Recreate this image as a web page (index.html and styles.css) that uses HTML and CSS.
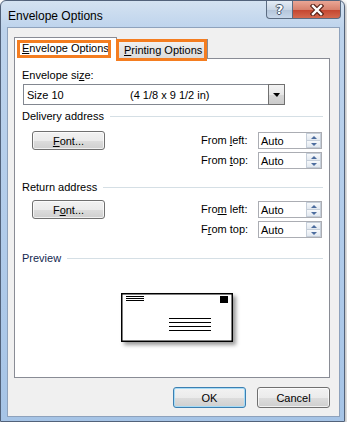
FILE: index.html
```html
<!DOCTYPE html>
<html lang="en">
<head>
    <meta charset="UTF-8">
    <meta name="viewport" content="width=device-width, initial-scale=1.0">
    <title>Envelope Options</title>
    <link rel="stylesheet" href="styles.css">
</head>
<body>
    <div class="window">
        <div class="titlebar">
            <span class="title">Envelope Options</span>
            <div class="caption-buttons">
                <div class="caption-btn help">?</div>
                <div class="caption-btn close">
                    <svg width="14" height="12" viewBox="0 0 14 12">
                        <path d="M3 2 L11 10 M11 2 L3 10" stroke="#5a2318" stroke-width="4.6" stroke-linecap="square"/>
                        <path d="M3 2 L11 10 M11 2 L3 10" stroke="#fff" stroke-width="2.4" stroke-linecap="square"/>
                    </svg>
                </div>
            </div>
        </div>

        <div class="client">
            <div class="tabs">
                <div class="tab tab-active"><u>E</u>nvelope Options</div>
                <div class="tab tab-print"><u>P</u>rinting Options</div>
            </div>

            <div class="panel">
                <div class="field-label">Envelope si<u>z</u>e:</div>
                <div class="select">
                    <span class="select-size">Size 10</span>
                    <span>(4 1/8 x 9 1/2 in)</span>
                    <span class="select-btn"><span class="arrow-down"></span></span>
                </div>

                <div class="group-header">Delivery address</div>
                <div class="address-row">
                    <button class="btn font-btn"><u>F</u>ont...</button>
                    <div class="positions">
                        <span class="pos-label">From <u>l</u>eft:</span>
                        <div class="spin">
                            <span class="spin-value">Auto</span>
                            <span class="spin-btns"><span class="spin-up"></span><span class="spin-down"></span></span>
                        </div>
                        <span class="pos-label">From <u>t</u>op:</span>
                        <div class="spin">
                            <span class="spin-value">Auto</span>
                            <span class="spin-btns"><span class="spin-up"></span><span class="spin-down"></span></span>
                        </div>
                    </div>
                </div>

                <div class="group-header group-return">Return address</div>
                <div class="address-row address-return">
                    <button class="btn font-btn">F<u>o</u>nt...</button>
                    <div class="positions">
                        <span class="pos-label">Fro<u>m</u> left:</span>
                        <div class="spin">
                            <span class="spin-value">Auto</span>
                            <span class="spin-btns"><span class="spin-up"></span><span class="spin-down"></span></span>
                        </div>
                        <span class="pos-label">F<u>r</u>om top:</span>
                        <div class="spin">
                            <span class="spin-value">Auto</span>
                            <span class="spin-btns"><span class="spin-up"></span><span class="spin-down"></span></span>
                        </div>
                    </div>
                </div>

                <div class="group-header group-preview">Preview</div>
                <div class="envelope">
                    <svg width="112" height="49" viewBox="0 0 112 49">
                        <rect x="0.75" y="0.75" width="110.5" height="47.5" fill="#fff" stroke="#000" stroke-width="1.5"/>
                        <path d="M5 3.5 H23 M5 5.5 H23 M5 7.5 H23" stroke="#000" stroke-width="1"/>
                        <rect x="99" y="3" width="8" height="7" fill="#000"/>
                        <path d="M48 25.5 H90 M48 29.5 H90 M48 33.5 H90 M48 37.5 H90" stroke="#000" stroke-width="1.2"/>
                    </svg>
                </div>
            </div>

            <div class="dialog-buttons">
                <button class="btn btn-default">OK</button>
                <button class="btn">Cancel</button>
            </div>
        </div>
    </div>
</body>
</html>
```

FILE: styles.css
```css
body {
    margin: 0;
    background-color: #fff;
    font-family: "Liberation Sans", Arial, sans-serif;
    font-size: 11px;
    color: #000;
}

u {
    text-decoration-thickness: 1px;
    text-underline-offset: 1px;
}

.window {
    width: 345px;
    height: 422px;
    box-sizing: border-box;
    border: 1px solid #52627a;
    border-radius: 6px 6px 0 0;
    background: linear-gradient(to bottom, #d4e2f1, #bdd3ec 28px, #b0cbea 60%, #a6c4e6);
    box-shadow: 1px 2px 4px rgba(0, 0, 0, 0.35);
    display: flex;
    flex-direction: column;
}

/* title bar */
.titlebar {
    height: 26px;
    flex-shrink: 0;
    display: flex;
    justify-content: space-between;
}

.title {
    font-size: 12px;
    padding: 8px 0 0 7px;
    line-height: 14px;
}

.caption-buttons {
    display: flex;
    align-self: flex-start;
    margin-right: 3px;
}

.caption-btn {
    height: 18px;
    box-sizing: border-box;
    border: 1px solid #5b6c82;
    border-top: none;
    display: flex;
    align-items: center;
    justify-content: center;
}

.help {
    width: 27px;
    border-radius: 0 0 0 4px;
    background: linear-gradient(to bottom, #e4ecf5, #c9d6e5 50%, #b3c4d9 51%, #c7d7ea);
    color: #fff;
    font-family: "DejaVu Sans", sans-serif;
    font-weight: bold;
    font-size: 13px;
    line-height: 16px;
    text-shadow: 1px 0 0 #44546a, -1px 0 0 #44546a, 0 1px 0 #44546a, 0 -1px 0 #44546a;
}

.close {
    width: 48px;
    border-left: none;
    border-radius: 0 0 4px 0;
    background: linear-gradient(to bottom, #eaa695, #d8826e 50%, #c4442e 51%, #d4694f);
}

/* client area */
.client {
    flex: 1;
    margin: 0 4px 4px 6px;
    border: 1px solid #8ea2bc;
    background-color: #f0f0f0;
    padding: 9px 9px 8px 6px;
    display: flex;
    flex-direction: column;
    min-height: 0;
}

.tabs {
    height: 21px;
    display: flex;
    align-items: flex-end;
    position: relative;
    z-index: 1;
}

.tab {
    position: relative;
    box-sizing: border-box;
    height: 19px;
    width: 91px;
    padding: 3px 0 0 7px;
    border: 1px solid #898c95;
    border-left: none;
    border-bottom: none;
    background: linear-gradient(to bottom, #f4f4f4, #e6e6e6 50%, #dcdcdc);
    line-height: 14px;
}

.tab-active {
    width: 103px;
    height: 22px;
    margin-bottom: -1px;
    padding-top: 3px;
    border-left: 1px solid #898c95;
    background: #fff;
}

.tab-active::after {
    content: '';
    position: absolute;
    left: 2px;
    top: 2px;
    right: 5px;
    bottom: 1px;
    border: 3px solid #f47d20;
}

.tab-print::after {
    content: '';
    position: absolute;
    left: -1px;
    top: -1px;
    right: 0;
    bottom: -3px;
    border: 3px solid #f47d20;
}

.panel {
    flex: 1;
    border: 1px solid #898c95;
    background-color: #fff;
    padding: 9px 6px 0 7px;
    min-height: 0;
}

.field-label {
    line-height: 15px;
}

.select {
    margin: 1px 0 0 1px;
    width: 262px;
    height: 21px;
    box-sizing: border-box;
    border: 1px solid #828790;
    padding-left: 3px;
    display: flex;
    align-items: center;
}

.select-size {
    width: 103px;
}

.select-btn {
    margin: -1px -1px -1px auto;
    align-self: stretch;
    width: 17px;
    box-sizing: border-box;
    border: 1px solid #707070;
    background: linear-gradient(to bottom, #f3f3f3, #e6e6e6 50%, #d6d6d6 51%, #cbcbcb);
    display: flex;
    align-items: center;
    justify-content: center;
}

.arrow-down {
    width: 0;
    height: 0;
    border-top: 4px solid #000;
    border-left: 4px solid transparent;
    border-right: 3px solid transparent;
}

.group-header {
    margin-top: 4px;
    line-height: 15px;
    display: flex;
    align-items: center;
}

.group-header::after {
    content: '';
    flex: 1;
    height: 1px;
    margin-left: 6px;
    background-color: #d5dfe5;
}

.group-return {
    margin-top: 11px;
}

.group-preview {
    margin-top: 13px;
    color: #13284f;
}

.address-row {
    margin-top: 7px;
    display: flex;
    align-items: flex-start;
}

.address-return {
    margin-top: 5px;
}

.positions {
    margin: 1px 1px 0 auto;
    display: grid;
    grid-template-columns: 57px 64px;
    row-gap: 3px;
}

.pos-label {
    line-height: 17px;
}

.spin {
    height: 17px;
    box-sizing: border-box;
    border: 1px solid #abadb3;
    padding-left: 2px;
    display: flex;
    align-items: center;
}

.spin-btns {
    margin-left: auto;
    align-self: stretch;
    width: 15px;
    display: flex;
    flex-direction: column;
}

.spin-up,
.spin-down {
    flex: 1;
    border: 1px solid #c5ced9;
    background: linear-gradient(to bottom, #f7f9fb, #e2e8ef);
    display: flex;
    align-items: center;
    justify-content: center;
}

.spin-down {
    border-top: none;
}

.spin-up::before,
.spin-down::before {
    content: '';
    width: 0;
    height: 0;
    border-left: 3px solid transparent;
    border-right: 3px solid transparent;
}

.spin-up::before {
    border-bottom: 3px solid #4d6d9e;
}

.spin-down::before {
    border-top: 3px solid #4d6d9e;
}

.envelope {
    margin: 27px 0 0 99px;
    width: 112px;
    height: 49px;
    box-shadow: 3px 3px 4px rgba(0, 0, 0, 0.4);
}

.envelope svg {
    display: block;
}

/* buttons */
.btn {
    font-family: inherit;
    font-size: 11px;
    color: #000;
    box-sizing: border-box;
    width: 73px;
    height: 21px;
    padding: 0;
    border: 1px solid #707070;
    border-radius: 3px;
    background: linear-gradient(to bottom, #f2f2f2, #ebebeb 50%, #dddddd 51%, #cfcfcf);
    box-shadow: inset 0 0 0 1px rgba(255, 255, 255, 0.7);
}

.font-btn {
    margin-left: 10px;
    height: 19px;
}

.btn-default {
    border-color: #3c7fb1;
    box-shadow: inset 0 0 0 1px #a6dbf6;
}

.dialog-buttons {
    margin-top: 9px;
    display: flex;
    justify-content: flex-end;
    gap: 11px;
}
```
